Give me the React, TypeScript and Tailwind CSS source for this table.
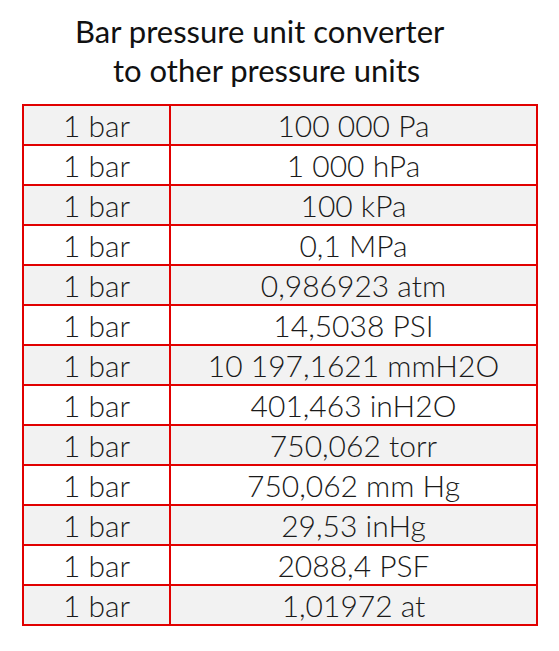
import React from "react";

const rows = [
  "100 000 Pa",
  "1 000 hPa",
  "100 kPa",
  "0,1 MPa",
  "0,986923 atm",
  "14,5038 PSI",
  "10 197,1621 mmH2O",
  "401,463 inH2O",
  "750,062 torr",
  "750,062 mm Hg",
  "29,53 inHg",
  "2088,4 PSF",
  "1,01972 at",
];

export default function App() {
  return (
    <div
      className="w-[559px] h-[651px] bg-white text-[#1a1a1a]"
      style={{ fontFamily: "Lato, 'Open Sans', sans-serif" }}
    >
      <div className="flex flex-col items-start pt-[12px] text-[31px] leading-[39px] text-[#111]">
        <div className="pl-[75px]">Bar pressure unit converter</div>
        <div className="pl-[113px]">to other pressure units</div>
      </div>
      <div className="ml-[22px] mt-[14px] w-[516px] border-2 border-[#e10000]">
        {rows.map((r, i) => (
          <div
            key={i}
            className={`flex ${i > 0 ? "h-[40px] border-t-2 border-[#e10000]" : "h-[38px]"} ${
              i % 2 === 0 ? "bg-[#f2f2f2]" : "bg-white"
            }`}
          >
            <div className="w-[147px] border-r-2 border-[#e10000] flex items-center justify-center text-[30px] font-light leading-[38px]">
              1 bar
            </div>
            <div className="flex-1 flex items-center justify-center text-[30px] font-light leading-[38px]">
              {r}
            </div>
          </div>
        ))}
      </div>
    </div>
  );
}
